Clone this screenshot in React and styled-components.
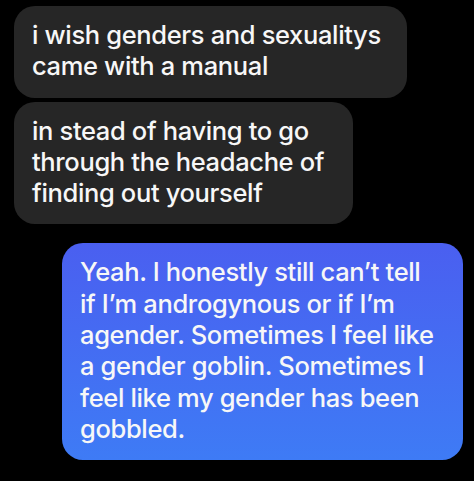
import React from 'react';
import styled, { createGlobalStyle } from 'styled-components';

const GlobalStyle = createGlobalStyle`
  html, body {
    margin: 0;
    padding: 0;
    background: #000;
  }
  body {
    width: 474px;
    height: 481px;
    overflow: hidden;
  }
`;

const Thread = styled.div`
  display: flex;
  flex-direction: column;
  padding: 6px 11px 0 14px;
  font-family: Inter, "Liberation Sans", sans-serif;
  font-size: 25.5px;
  font-weight: 500;
  letter-spacing: -0.35px;
  line-height: 31.3px;
  color: #f7f7f7;
`;

const Bubble = styled.div`
  box-sizing: border-box;
  width: ${(p) => p.$width}px;
  padding: 13px 16px 16px 18px;
  border-radius: 21px;
  white-space: nowrap;
  align-self: ${(p) => (p.$mine ? 'flex-end' : 'flex-start')};
  margin-top: ${(p) => p.$gap || 0}px;
  background: ${(p) => (p.$mine ? 'linear-gradient(180deg, #4a5ff0 0%, #3e7bf5 100%)' : '#262626')};
`;

const Line = styled.div``;

const messages = [
  {
    mine: false,
    width: 393,
    lines: ['i wish genders and sexualitys', 'came with a manual'],
  },
  {
    mine: false,
    width: 339,
    gap: 4,
    lines: ['in stead of having to go', 'through the headache of', 'finding out yourself'],
  },
  {
    mine: true,
    width: 401,
    gap: 19,
    lines: [
      'Yeah. I honestly still can\u2019t tell',
      'if I\u2019m androgynous or if I\u2019m',
      'agender. Sometimes I feel like',
      'a gender goblin. Sometimes I',
      'feel like my gender has been',
      'gobbled.',
    ],
  },
];

export default function App() {
  return (
    <>
      <GlobalStyle />
      <Thread>
        {messages.map((m, i) => (
          <Bubble key={i} $mine={m.mine} $width={m.width} $gap={m.gap}>
            {m.lines.map((l) => (
              <Line key={l}>{l}</Line>
            ))}
          </Bubble>
        ))}
      </Thread>
    </>
  );
}
